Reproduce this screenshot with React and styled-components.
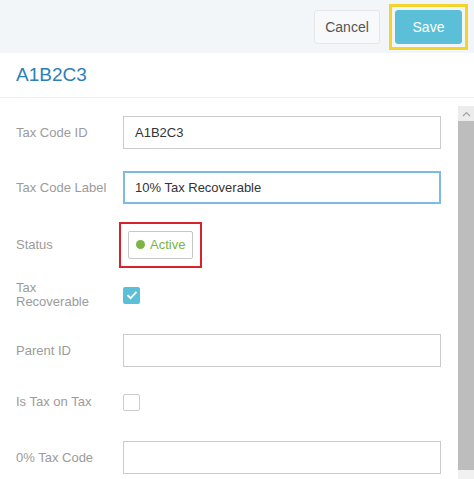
import styled, { createGlobalStyle } from "styled-components";

const GlobalStyle = createGlobalStyle`
  html, body {
    margin: 0;
    padding: 0;
    background: #ffffff;
  }
  body {
    font-family: "Liberation Sans", Arial, sans-serif;
  }
`;

const Page = styled.div`
  width: 474px;
  height: 479px;
  display: flex;
  flex-direction: column;
  overflow: hidden;
`;

const Toolbar = styled.div`
  height: 53px;
  flex-shrink: 0;
  background: #f3f6f9;
  display: flex;
  align-items: center;
  justify-content: flex-end;
  padding-right: 6px;
`;

const Button = styled.button`
  width: ${({ $w }) => $w}px;
  height: 34px;
  padding: 0;
  font-family: inherit;
  font-size: 14px;
  border-radius: 3px;
  cursor: pointer;
  background: ${({ $primary }) => ($primary ? "#5bc0d7" : "#f8f9fa")};
  color: ${({ $primary }) => ($primary ? "#ffffff" : "#555555")};
  border: 1px solid ${({ $primary }) => ($primary ? "#5bc0d7" : "#e4e6e8")};
`;

const Highlight = styled.span`
  display: inline-flex;
  padding: ${({ $gap }) => $gap}px;
  border: ${({ $w }) => $w}px solid ${({ $color }) => $color};
  margin-left: ${({ $ml }) => $ml || 0}px;
`;

const TitleBar = styled.div`
  height: 44px;
  flex-shrink: 0;
  display: flex;
  align-items: center;
  padding-left: 16px;
  border-bottom: 1px solid #eeeeee;
`;

const Title = styled.h1`
  margin: 0;
  font-size: 19px;
  font-weight: 400;
  color: #2b80b8;
`;

const Body = styled.div`
  flex: 1;
  display: flex;
  padding-top: 8px;
  min-height: 0;
`;

const Form = styled.div`
  flex: 1;
  display: flex;
  flex-direction: column;
  padding: 10px 17px 0 16px;
`;

const Row = styled.div`
  display: flex;
  align-items: center;
  height: ${({ $h }) => $h}px;
  margin-top: ${({ $mt }) => $mt || 0}px;
  flex-shrink: 0;
`;

const Label = styled.div`
  width: 107px;
  flex-shrink: 0;
  font-size: 13px;
  line-height: 14px;
  color: #9b9b9b;
`;

const Input = styled.div`
  flex: 1;
  height: 33px;
  box-sizing: border-box;
  display: flex;
  align-items: center;
  padding-left: ${({ $focus }) => ($focus ? 10 : 11)}px;
  font-size: 13px;
  color: #333333;
  border: ${({ $focus }) => ($focus ? "2px solid #7dbbe5" : "1px solid #cbcbcb")};
`;

const Badge = styled.div`
  height: 28px;
  box-sizing: border-box;
  padding: 0 7px;
  display: flex;
  align-items: center;
  gap: 5px;
  border: 1px solid #c8c8c8;
  border-radius: 2px;
  font-size: 13px;
  color: #7cb342;
`;

const Dot = styled.span`
  width: 9px;
  height: 9px;
  border-radius: 50%;
  background: #7cb342;
`;

const Checkbox = styled.span`
  width: 17px;
  height: 17px;
  box-sizing: border-box;
  border-radius: 2px;
  display: flex;
  align-items: center;
  justify-content: center;
  background: ${({ $checked }) => ($checked ? "#5bc0d7" : "#ffffff")};
  border: ${({ $checked }) => ($checked ? "none" : "1.5px solid #cccccc")};
`;

const Scrollbar = styled.div`
  width: 16px;
  flex-shrink: 0;
  display: flex;
  flex-direction: column;
  background: #f1f1f1;
`;

const ArrowButton = styled.div`
  height: 15px;
  display: flex;
  align-items: center;
  justify-content: center;
  background: #ececec;
`;

const Thumb = styled.div`
  flex: 1;
  background: #bdbdbd;
  margin-bottom: 9px;
`;

const Check = () => (
  <svg width="12" height="10" viewBox="0 0 12 10">
    <path d="M1.5 5.2 L4.6 8.2 L10.5 1.8" fill="none" stroke="#fff" strokeWidth="1.8" />
  </svg>
);

const App = () => {
  return (
    <Page>
      <GlobalStyle />
      <Toolbar>
        <Button $w={66}>Cancel</Button>
        <Highlight $w={3} $gap={3} $color="#f3d42c" $ml={9}>
          <Button $w={67} $primary>
            Save
          </Button>
        </Highlight>
      </Toolbar>
      <TitleBar>
        <Title>A1B2C3</Title>
      </TitleBar>
      <Body>
        <Form>
          <Row $h={33}>
            <Label>Tax Code ID</Label>
            <Input>A1B2C3</Input>
          </Row>
          <Row $h={33} $mt={22}>
            <Label>Tax Code Label</Label>
            <Input $focus>10% Tax Recoverable</Input>
          </Row>
          <Row $h={47} $mt={17}>
            <Label>Status</Label>
            <Highlight $w={2} $gap={7} $color="#d8232c" $ml={-4}>
              <Badge>
                <Dot />
                Active
              </Badge>
            </Highlight>
          </Row>
          <Row $h={28} $mt={13}>
            <Label>
              Tax
              <br />
              Recoverable
            </Label>
            <Checkbox $checked>
              <Check />
            </Checkbox>
          </Row>
          <Row $h={33} $mt={25}>
            <Label>Parent ID</Label>
            <Input />
          </Row>
          <Row $h={28} $mt={21}>
            <Label>Is Tax on Tax</Label>
            <Checkbox />
          </Row>
          <Row $h={33} $mt={25}>
            <Label>0% Tax Code</Label>
            <Input />
          </Row>
        </Form>
        <Scrollbar>
          <ArrowButton>
            <svg width="9" height="6" viewBox="0 0 9 6">
              <path d="M1 5 L4.5 1.5 L8 5" fill="none" stroke="#a3a3a3" strokeWidth="1.2" />
            </svg>
          </ArrowButton>
          <Thumb />
        </Scrollbar>
      </Body>
    </Page>
  );
};

export default App;
